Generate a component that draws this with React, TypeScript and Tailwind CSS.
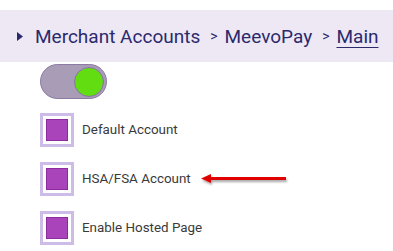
import { useState } from 'react';

type Option = { id: string; label: string };

const options: Option[] = [
  { id: 'default', label: 'Default Account' },
  { id: 'hsa', label: 'HSA/FSA Account' },
  { id: 'hosted', label: 'Enable Hosted Page' },
];

function Checkbox({ checked }: { checked: boolean }) {
  return (
    <div className="w-[34px] h-[34px] border-[3px] border-[#cdbbe8] bg-white flex items-center justify-center">
      <div
        className={`w-[22px] h-[22px] border border-[#8d2c9e] ${checked ? 'bg-[#a944bb]' : 'bg-white'}`}
      />
    </div>
  );
}

function Arrow() {
  return (
    <svg width="92" height="14" viewBox="0 0 92 14" className="ml-[9px]">
      <defs>
        <filter id="sh" x="-10%" y="-50%" width="120%" height="200%">
          <feDropShadow dx="1" dy="2" stdDeviation="1.2" floodColor="#000" floodOpacity="0.35" />
        </filter>
      </defs>
      <g filter="url(#sh)">
        <rect x="8" y="5" width="78" height="3" fill="#e00000" />
        <polygon points="1,6.5 11,2 11,11" fill="#e00000" />
      </g>
    </svg>
  );
}

function App() {
  const [on, setOn] = useState(true);

  return (
    <div className="min-h-screen bg-white pt-[10px]" style={{ fontFamily: 'Roboto, sans-serif' }}>
      <div className="h-[52px] bg-[#eee8f5] flex items-center pl-[17px] text-[#2b2a6b]">
        <svg width="6" height="9" viewBox="0 0 6 9" className="mr-[12px] mt-[1px]">
          <polygon points="0,0 6,4.5 0,9" fill="#2b2a6b" />
        </svg>
        <span className="text-[19px] leading-none">Merchant Accounts</span>
        <span className="text-[14px] ml-[10px] mr-[7px]">&gt;</span>
        <span className="text-[19px] leading-none">MeevoPay</span>
        <span className="text-[14px] ml-[10px] mr-[7px]">&gt;</span>
        <span className="text-[19px] leading-none underline underline-offset-[4px] decoration-1">Main</span>
      </div>

      <div className="pl-[40px] pt-[2px]">
        <button
          onClick={() => setOn(!on)}
          className="w-[67px] h-[35px] rounded-full bg-[#a99cb7] border border-[#8b7aa3] flex items-center justify-end pr-[2px]"
        >
          <span className="w-[30px] h-[30px] rounded-full bg-[#62dd12] border border-[#8a6fb0]" />
        </button>

        <div className="mt-[14px] flex flex-col gap-[15px]">
          {options.map((o) => (
            <div key={o.id} className="flex items-center">
              <Checkbox checked />
              <span className="ml-[8px] text-[13.4px] text-[#3a3a3a]">{o.label}</span>
              {o.id === 'hsa' && <Arrow />}
            </div>
          ))}
        </div>
      </div>
    </div>
  );
}

export default App;
